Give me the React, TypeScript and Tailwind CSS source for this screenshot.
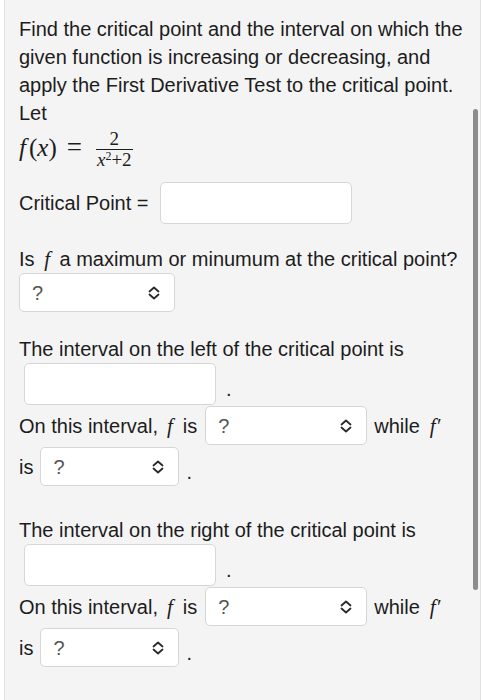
import React from 'react';

const Chevron: React.FC = () => (
  <svg width="12" height="14" viewBox="0 0 12 14" fill="none" stroke="#2a2a2a" strokeWidth="1.8" strokeLinecap="round" strokeLinejoin="round">
    <path d="M1.5 5.5 6 1.5l4.5 4" />
    <path d="M1.5 8.5 6 12.5l4.5-4" />
  </svg>
);

const Select: React.FC<{ width: string }> = ({ width }) => (
  <div className={`${width} h-[39px] flex items-center justify-between bg-white border border-[#d6d6d6] rounded-[5px] pl-[12px] pr-[14px] text-[#555]`}>
    <span>?</span>
    <Chevron />
  </div>
);

const Input: React.FC<{ width: string }> = ({ width }) => (
  <div className={`${width} h-[42px] bg-white border border-[#d6d6d6] rounded-[5px]`} />
);

const F: React.FC<{ prime?: boolean }> = ({ prime }) => (
  <span className="italic text-[21px]" style={{ fontFamily: '"Liberation Serif", serif' }}>
    f{prime ? '′' : ''}
  </span>
);

const IntervalBlock: React.FC<{ side: string }> = ({ side }) => (
  <div>
    <p>The interval on the {side} of the critical point is</p>
    <div className="flex items-end">
      <div className="ml-[5px]">
        <Input width="w-[192px]" />
      </div>
      <span className="ml-[10px] mb-[6px] leading-none">.</span>
    </div>
    <div className="flex items-center mt-[1px]">
      <span>On this interval,</span>
      <span className="ml-[9px]"><F /></span>
      <span className="ml-[10px] mr-[8px]">is</span>
      <Select width="w-[162px]" />
      <span className="ml-[7px]">while</span>
      <span className="ml-[10px]"><F prime /></span>
    </div>
    <div className="flex items-center mt-[2px]">
      <span className="mr-[7px]">is</span>
      <Select width="w-[139px]" />
      <span className="ml-[7px] mt-[10px]">.</span>
    </div>
  </div>
);

export default function App() {
  return (
    <div className="min-h-[700px] bg-white relative" style={{ fontFamily: '"Liberation Sans", Arial, sans-serif' }}>
      <div className="ml-[4px] mr-[1px] min-h-[700px] bg-[#f4f4f4] border-l border-r border-[#e2e2e2] pl-[14px] pr-[8px] pt-[15px] text-[20px] leading-[28px] text-[#1c1c1c]">
        <p>
          Find the critical point and the interval on which the given function is increasing or decreasing, and apply the First Derivative Test to the critical point.
        </p>
        <p>Let</p>
        <div className="flex items-center h-[40px]" style={{ fontFamily: '"Liberation Serif", serif' }}>
          <span className="text-[25px] whitespace-nowrap">
            <span className="italic mr-[3px]">f</span>(<span className="italic">x</span>)<span className="mx-[10px] text-[27px]">=</span>
          </span>
          <span className="ml-[4px] mt-[4px] inline-flex flex-col items-center text-[19px] leading-[20px]">
            <span className="px-[2px]">2</span>
            <span className="border-t border-[#1c1c1c] px-[1px]">
              <span className="italic">x</span>
              <sup className="text-[12px]">2</sup>+2
            </span>
          </span>
        </div>

        <div className="flex items-center mt-[15px]">
          <span>Critical Point =</span>
          <div className="ml-[11px]">
            <Input width="w-[192px]" />
          </div>
        </div>

        <p className="mt-[21px]">
          Is <span className="mx-[4px]"><F /></span> a maximum or minumum at the critical point?
        </p>
        <Select width="w-[156px]" />

        <div className="mt-[23px]">
          <IntervalBlock side="left" />
        </div>
        <div className="mt-[30px]">
          <IntervalBlock side="right" />
        </div>
      </div>
      <div className="absolute left-[473px] top-[109px] w-[5px] h-[481px] rounded-full bg-[#8c8c8c]" />
    </div>
  );
}
